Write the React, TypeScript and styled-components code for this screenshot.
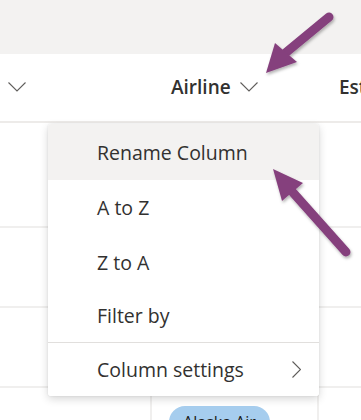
import React from "react"
import styled, { createGlobalStyle } from "styled-components"

const GlobalStyle = createGlobalStyle`
  *, *::before, *::after {
    box-sizing: border-box;
  }
  body {
    margin: 0;
    font-family: "Open Sans", "Noto Sans", sans-serif;
    background: #ffffff;
    overflow: hidden;
  }
`

const Page = styled.div`
  position: relative;
  width: 361px;
  height: 420px;
  overflow: hidden;
  background: #fff;
`

const TopBand = styled.div`
  height: 54px;
  background: #f3f2f1;
`

const HeaderRow = styled.div`
  display: grid;
  grid-template-columns: 150px 167px 1fr;
  height: 69px;
  border-bottom: 2px solid #edebe9;
  background: #fff;
`

const HeaderCell = styled.div<{ $pad: number }>`
  display: flex;
  align-items: center;
  padding-left: ${(p) => p.$pad}px;
  padding-bottom: 2px;
  gap: 9px;
  font-size: 19px;
  font-weight: 600;
  color: #323130;
  white-space: nowrap;
  overflow: hidden;
`

const Row = styled.div<{ $h: number }>`
  display: grid;
  grid-template-columns: 150px 167px 1fr;
  height: ${(p) => p.$h}px;
  border-bottom: 2px solid #f0efee;
`

const Cell = styled.div<{ $line?: boolean }>`
  border-left: ${(p) => (p.$line ? "2px solid #f0efee" : "none")};
  padding: 18px 0 0 17px;
`

const Pill = styled.span`
  display: inline-block;
  width: 101px;
  height: 32px;
  border-radius: 16px;
  background: #a6cdee;
  color: #1b1a19;
  font-size: 16px;
  line-height: 32px;
  text-align: center;
`

const Menu = styled.div`
  position: absolute;
  left: 48px;
  top: 124px;
  width: 271px;
  background: #fff;
  border-radius: 3px;
  box-shadow: 0 3px 9px rgba(0, 0, 0, 0.16), 0 0 2px rgba(0, 0, 0, 0.1);
  overflow: hidden;
`

const Item = styled.div<{ $active?: boolean; $h: number }>`
  display: flex;
  align-items: center;
  justify-content: space-between;
  height: ${(p) => p.$h}px;
  padding: 0 18px 0 49px;
  font-size: 19.5px;
  color: #323130;
  background: ${(p) => (p.$active ? "#f3f2f1" : "#fff")};
`

const Divider = styled.div`
  height: 1px;
  background: #e1dfdd;
`

const Overlay = styled.svg`
  position: absolute;
  left: 0;
  top: 0;
  pointer-events: none;
`

const Chevron = () => (
  <svg width="18" height="10" viewBox="0 0 18 10" fill="none">
    <path d="M0.5 0.5 L9 9 L17.5 0.5" stroke="#605e5c" strokeWidth="1.1" />
  </svg>
)

const Right = () => (
  <svg width="9" height="17" viewBox="0 0 9 17" fill="none">
    <path d="M0.5 0.5 L8.5 8.5 L0.5 16.5" stroke="#605e5c" strokeWidth="1.1" />
  </svg>
)

const Arrow = ({ tail, tip, a, b }: { tail: number[]; tip: number[]; a: number[]; b: number[] }) => {
  const mx = (a[0] + b[0]) / 2
  const my = (a[1] + b[1]) / 2
  return (
    <g filter="url(#sh)">
      <line x1={tail[0]} y1={tail[1]} x2={mx} y2={my} stroke="#85417d" strokeWidth="9" strokeLinecap="round" />
      <polygon points={`${tip[0]},${tip[1]} ${a[0]},${a[1]} ${b[0]},${b[1]}`} fill="#85417d" />
    </g>
  )
}

export default function App() {
  return (
    <Page>
      <GlobalStyle />
      <TopBand />
      <HeaderRow>
        <HeaderCell $pad={8}>
          <Chevron />
        </HeaderCell>
        <HeaderCell $pad={21}>
          Airline
          <Chevron />
        </HeaderCell>
        <HeaderCell $pad={22}>Estimated</HeaderCell>
      </HeaderRow>
      <Row $h={105}>
        <Cell />
        <Cell />
        <Cell />
      </Row>
      <Row $h={80}>
        <Cell />
        <Cell />
        <Cell />
      </Row>
      <Row $h={80}>
        <Cell />
        <Cell />
        <Cell />
      </Row>
      <Row $h={60}>
        <Cell />
        <Cell $line>
          <Pill>Alaska Air</Pill>
        </Cell>
        <Cell $line />
      </Row>

      <Menu>
        <Item $active $h={56}>Rename Column</Item>
        <Item $h={55}>A to Z</Item>
        <Item $h={54}>Z to A</Item>
        <Item $h={53}>Filter by</Item>
        <Divider />
        <Item $h={53}>
          Column settings
          <Right />
        </Item>
      </Menu>

      <Overlay width="361" height="420" viewBox="0 0 361 420">
        <defs>
          <filter id="sh" x="-20%" y="-20%" width="140%" height="140%">
            <feDropShadow dx="1" dy="2" stdDeviation="1.5" floodColor="#000" floodOpacity="0.3" />
          </filter>
        </defs>
        <Arrow tail={[329, 17]} tip={[266, 73]} a={[275, 43]} b={[297, 62]} />
        <Arrow tail={[346, 252]} tip={[273, 169]} a={[303, 183]} b={[282, 201]} />
      </Overlay>
    </Page>
  )
}
